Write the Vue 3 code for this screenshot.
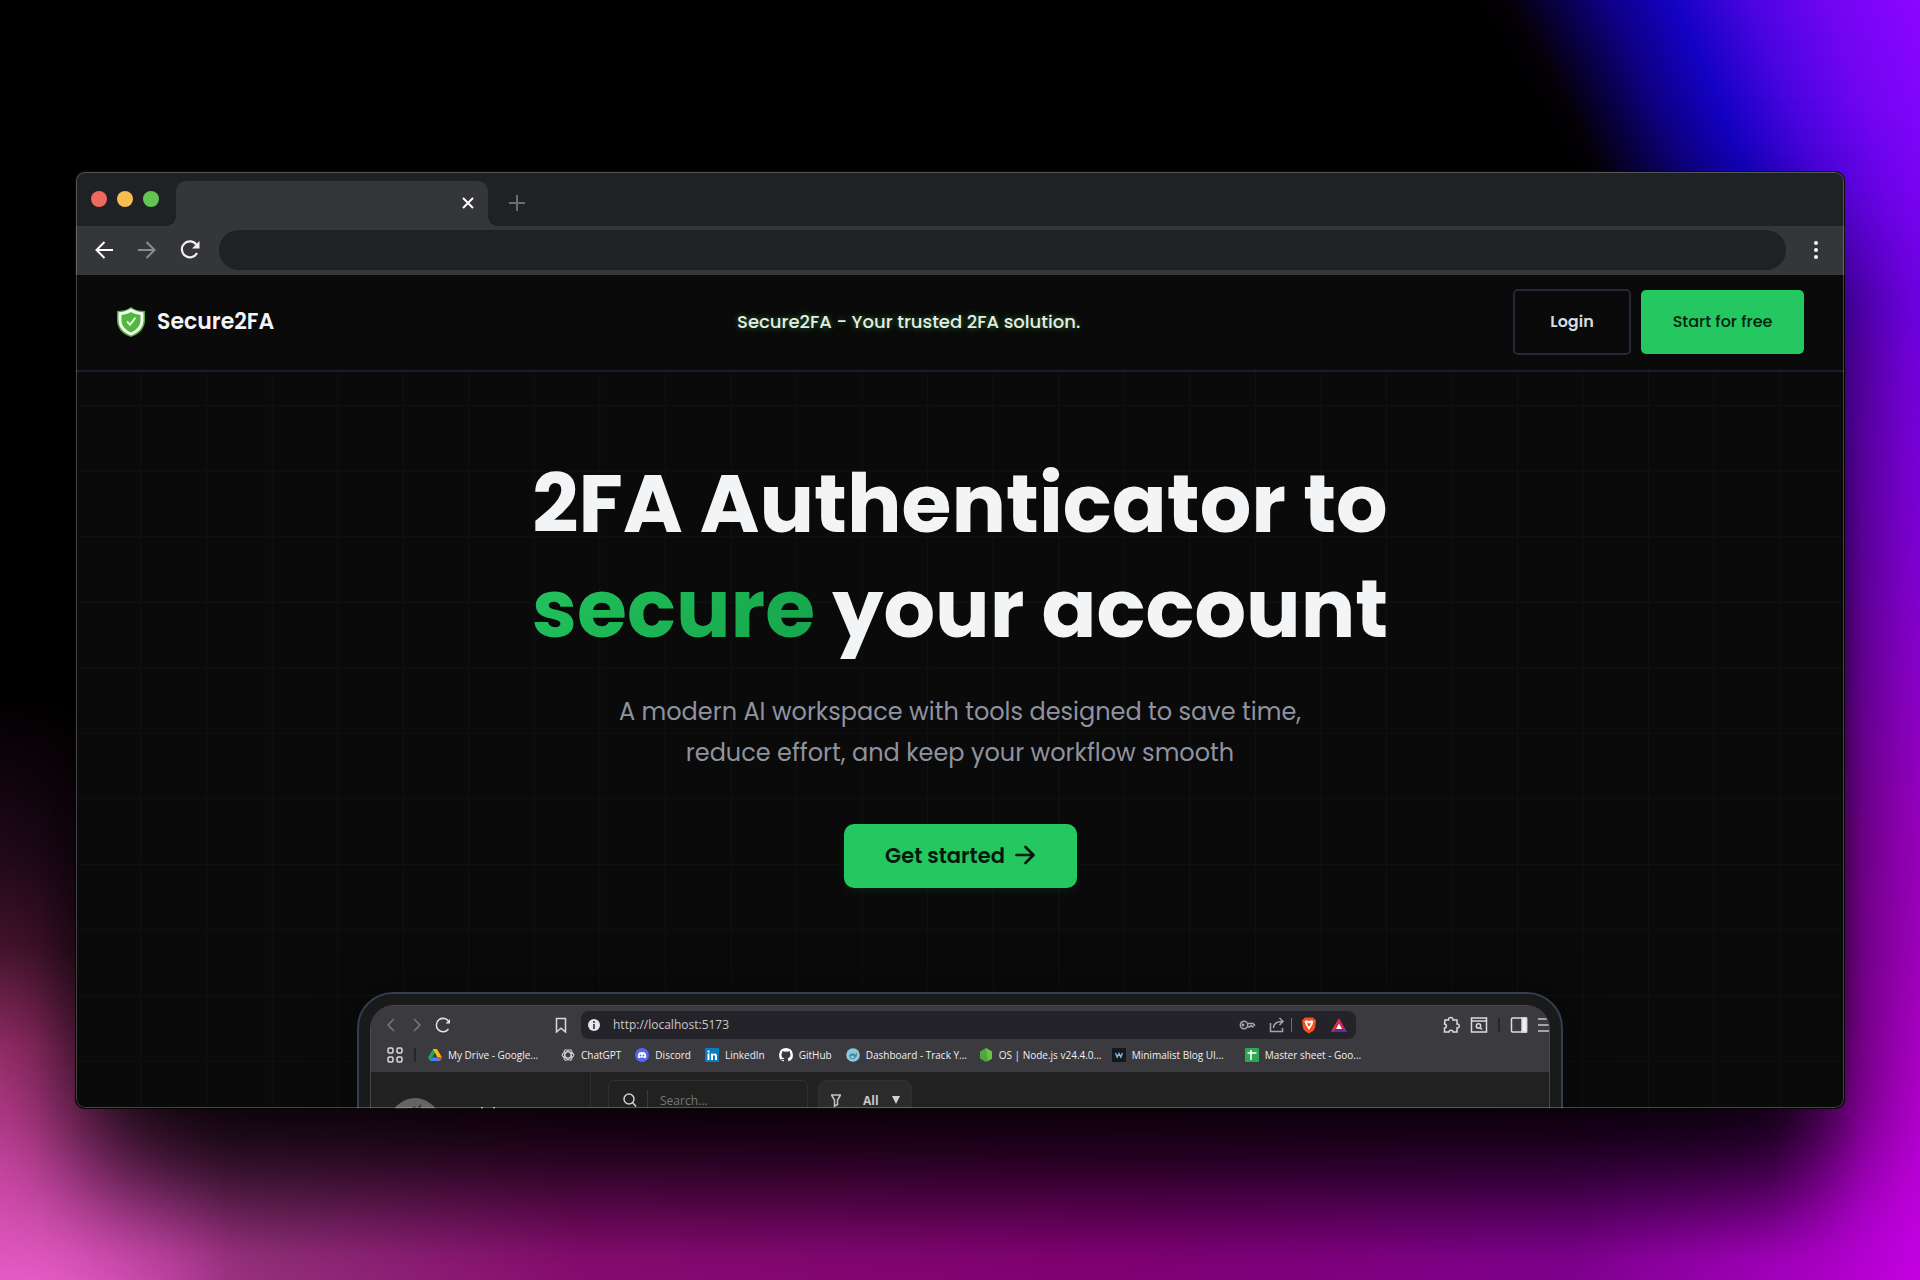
<script setup>
import { ref } from 'vue'

const address = ref('')
const search = ref('')
const filter = ref('All')

const bookmarks = [
  { icon: 'drive', label: 'My Drive - Google...', long: true },
  { icon: 'chatgpt', label: 'ChatGPT' },
  { icon: 'discord', label: 'Discord' },
  { icon: 'linkedin', label: 'LinkedIn' },
  { icon: 'github', label: 'GitHub' },
  { icon: 'dashboard', label: 'Dashboard - Track Y...', long: true },
  { icon: 'node', label: 'OS | Node.js v24.4.0...', long: true },
  { icon: 'blog', label: 'Minimalist Blog UI...', long: true },
  { icon: 'sheet', label: 'Master sheet - Goo...', long: true },
]
</script>

<template>
  <div class="desktop">
    <div class="glow glow-top"></div>
    <div class="glow glow-right"></div>
    <div class="glow glow-bottom"></div>
    <div class="glow glow-left"></div>

    <div class="window">
      <div class="tabs">
        <div class="lights">
          <span class="light red"></span>
          <span class="light yellow"></span>
          <span class="light green"></span>
        </div>
        <div class="tab">
          <button class="icon-btn" aria-label="Close tab">
            <svg width="12" height="12" viewBox="0 0 12 12" fill="none" stroke="#fff" stroke-width="2">
              <path d="M1 1l10 10M11 1L1 11" />
            </svg>
          </button>
        </div>
        <button class="icon-btn new-tab" aria-label="New tab">
          <svg width="16" height="16" viewBox="0 0 16 16" fill="none" stroke="#6b6c70" stroke-width="2">
            <path d="M8 0v16M0 8h16" />
          </svg>
        </button>
      </div>

      <div class="toolbar">
        <button class="icon-btn nav" aria-label="Back">
          <svg width="18" height="18" viewBox="0 0 18 18" fill="none" stroke="#fff" stroke-width="2">
            <path d="M18 9H1.5M9.5 1L1.5 9l8 8" />
          </svg>
        </button>
        <button class="icon-btn nav" aria-label="Forward">
          <svg width="18" height="18" viewBox="0 0 18 18" fill="none" stroke="#8b8c8f" stroke-width="2">
            <path d="M0 9h16.500M8.500 1l8 8-8 8" />
          </svg>
        </button>
        <button class="icon-btn nav" aria-label="Reload">
          <svg width="20" height="20" viewBox="0 0 20 20">
            <path d="M16.600 5A8 8 0 1 0 17 13" fill="none" stroke="#f1f1f1" stroke-width="2.200" />
            <path d="M19.500 1v7.500H12z" fill="#f1f1f1" />
          </svg>
        </button>
        <input v-model="address" class="address" type="text" aria-label="Address" />
        <button class="icon-btn menu" aria-label="Menu">
          <svg width="4" height="18" viewBox="0 0 4 18" fill="#fff">
            <circle cx="2" cy="2" r="2" />
            <circle cx="2" cy="9" r="2" />
            <circle cx="2" cy="16" r="2" />
          </svg>
        </button>
      </div>

      <div class="page">
        <header class="header">
          <a class="logo" href="#">
            <svg width="28" height="30" viewBox="0 0 28 30">
              <path d="M14 0C10 3 5 4 0 4v9c0 8 5 14 14 17 9-3 14-9 14-17V4C23 4 18 3 14 0z" fill="#4caf3c" />
              <path d="M14 1.500C10 4 6 5 1.500 5.200V13c0 7 4.500 12.500 12.500 15.500C22 25.500 26.500 20 26.500 13V5.200C22 5 18 4 14 1.500z" fill="#f4faf2" />
              <path d="M14 5C11 6.800 8 7.600 4.500 7.900V13c0 5.500 3.500 9.800 9.500 12.500 6-2.700 9.500-7 9.500-12.500V7.900C20 7.600 17 6.800 14 5z" fill="#4fb83d" />
              <path d="M10 14.500l3 3.200 5.500-7" fill="none" stroke="#e4f5df" stroke-width="2" />
            </svg>
            <span>Secure2FA</span>
          </a>
          <p class="tagline">Secure2FA - Your trusted 2FA solution.</p>
          <nav class="actions">
            <button class="btn-login">Login</button>
            <button class="btn-start">Start for free</button>
          </nav>
        </header>

        <main class="hero">
          <h1>2FA Authenticator to<br /><span class="accent">secure</span> your account</h1>
          <p class="lead">A modern AI workspace with tools designed to save time,<br />reduce effort, and keep your workflow smooth</p>
          <button class="cta">
            Get started
            <svg width="20" height="20" viewBox="0 0 20 20" fill="none" stroke="#06180d" stroke-width="2.600" stroke-linecap="round" stroke-linejoin="round">
              <path d="M1.500 10h16.500M10.500 2l8 8-8 8" />
            </svg>
          </button>

          <section class="device">
            <div class="screen">
              <div class="brave-bar">
                <div class="brave-nav">
                  <svg class="ico" viewBox="0 0 18 18" stroke="#77767b"><path d="M12 3L6 9l6 6" /></svg>
                  <svg class="ico" viewBox="0 0 18 18" stroke="#77767b"><path d="M6 3l6 6-6 6" /></svg>
                  <svg class="ico" viewBox="0 0 18 18" stroke="#e3e3e5" stroke-width="2">
                    <path d="M15 6A6.700 6.700 0 1 0 14.500 13" />
                    <path d="M16 3v4.500h-4.500z" fill="#e3e3e5" stroke="none" />
                  </svg>
                  <svg class="ico save" viewBox="0 0 18 18"><path d="M4.500 2.500h9v13.500L9 12.200 4.500 16z" /></svg>
                </div>
                <div class="brave-url">
                  <svg class="ico" viewBox="0 0 18 18" stroke="none">
                    <circle cx="9" cy="9" r="6" fill="#e6e6e8" />
                    <path d="M8 5h2v2H8zM8 8h2v5H8z" fill="#55545a" />
                  </svg>
                  <span class="url-text">http://localhost:5173</span>
                  <svg class="ico" viewBox="0 0 18 18" stroke="#a5a5a8">
                    <circle cx="6" cy="9" r="3.700" />
                    <circle cx="5" cy="9" r="0.700" />
                    <path d="M9.500 7.500H15l1.500 1.500-2 2-1.500-1.500-1.500 1.500H9.500" />
                  </svg>
                  <svg class="ico share" viewBox="0 0 18 18" stroke="#a5a5a8">
                    <path d="M2.500 7v8.500h12V12M5.500 12c0-4 3-6.500 9-6.500M11.500 2l3.500 3.500L11.500 9" />
                  </svg>
                  <span class="bar light-bar"></span>
                  <svg class="ico brave" viewBox="0 0 18 18" stroke="none">
                    <path d="M5 1.500h8l3 3-1 7.500c-1 2.500-3 4-6 5.500-3-1.500-5-3-6-5.500L2 4.500z" fill="#f4511e" />
                    <path d="M4.500 5l3-.8L9 5.500l1.500-1.300 3 .8-1 3.500L9 14 5.500 8.500z" fill="#fff" />
                    <path d="M7 6.500l2 1 2-1-1 3.500H8z" fill="#f4511e" />
                  </svg>
                  <svg class="ico" viewBox="0 0 18 18" stroke="none">
                    <path d="M9 2L1 16l4-2z" fill="#ff4724" />
                    <path d="M9 2l8 14-4-2z" fill="#a3278f" />
                    <path d="M1 16h16l-4-3H5z" fill="#5b2ea6" />
                    <path d="M9 2l5 11H4z" fill="#d9264f" />
                    <path d="M9 7.500l3 5.500H6z" fill="#fff" />
                  </svg>
                </div>
                <div class="brave-tools">
                  <svg class="ico" viewBox="0 0 18 18" stroke="#dcdcde">
                    <path d="M3 4h3.500c-.5-3.500 5-3.500 4.500 0h4v4c3-.5 3 4.500 0 4v4h-4c0-2.500-4-2.500-4 0H2.500v-4c2.500 0 2.500-4 0-4z" />
                  </svg>
                  <svg class="ico" viewBox="0 0 18 18" stroke="#dcdcde">
                    <path d="M1.500 2h15v14h-15zM1.500 5h15" />
                    <circle cx="8.500" cy="10" r="2.200" />
                    <path d="M10.500 12l1.500 1.500" />
                  </svg>
                  <span class="bar"></span>
                  <svg class="ico" viewBox="0 0 18 18" stroke="#dcdcde">
                    <rect x="1.500" y="2" width="15" height="14" rx="1" />
                    <path d="M12 2h4.500v14H12z" fill="#f2f2f3" />
                  </svg>
                  <svg class="ico" viewBox="0 0 18 18" stroke="#c8c8ca"><path d="M0 3h18M0 9h18M0 15h18" /></svg>
                </div>
              </div>

              <div class="bookmarks">
                <svg class="ico" viewBox="0 0 18 18" stroke="#dcdcde">
                  <rect x="2" y="2" width="5" height="5" rx="1.500" />
                  <rect x="11" y="2" width="5" height="5" rx="1.500" />
                  <rect x="2" y="11" width="5" height="5" rx="1.500" />
                  <rect x="11" y="11" width="5" height="5" rx="1.500" />
                </svg>
                <span class="bar"></span>
                <a v-for="b in bookmarks" :key="b.label" class="bookmark" href="#">
                  <svg class="fav" viewBox="0 0 14 14">
                    <g v-if="b.icon === 'drive'">
                      <path d="M5 1h4L4.500 9 2 13 0 9.500z" fill="#23a55a" />
                      <path d="M5 1h4l5 8.500h-4.500z" fill="#fbbc04" />
                      <path d="M4.300 9.500H14L12 13H2z" fill="#4285f4" />
                      <path d="M10 9.500h4L12 13z" fill="#ea4335" />
                    </g>
                    <g v-else-if="b.icon === 'chatgpt'" fill="none" stroke="#cfcfd2" stroke-width="1.200">
                      <ellipse cx="7" cy="7" rx="5.800" ry="3" />
                      <ellipse cx="7" cy="7" rx="5.800" ry="3" transform="rotate(60 7 7)" />
                      <ellipse cx="7" cy="7" rx="5.800" ry="3" transform="rotate(120 7 7)" />
                    </g>
                    <g v-else-if="b.icon === 'discord'">
                      <circle cx="7" cy="7" r="7" fill="#5865f2" />
                      <path d="M4 4.500q3-1 6 0 1.500 2.500 1.200 5-1 .8-2 .8L8.700 9.500H5.300l-.5.800q-1 0-2-.8Q2.500 7 4 4.500z" fill="#fff" />
                      <circle cx="5.500" cy="7.500" r="0.900" fill="#5865f2" />
                      <circle cx="8.500" cy="7.500" r="0.900" fill="#5865f2" />
                    </g>
                    <g v-else-if="b.icon === 'linkedin'">
                      <rect width="14" height="14" fill="#0a7bbd" />
                      <path d="M2.500 5.500h2V12h-2zM2.500 2.500h2v2h-2zM6 5.500h2v1c1-1.600 4-1.500 4 1.500v4h-2V8.500c0-1.800-2-1.600-2 0V12H6z" fill="#fff" />
                    </g>
                    <g v-else-if="b.icon === 'github'">
                      <path d="M7 0a7 7 0 0 0-2.200 13.600V12c-2 .4-2.600-.6-3-1.500 1.200.2 1.700 1 3 .6.100-.5.300-.8.500-1C3 9.800 2.400 8.500 2.500 6.500c0-.7.300-1.300.7-1.800-.1-.5-.1-1.200.1-1.800.7 0 1.300.4 1.900.8a7 7 0 0 1 3.600 0c.6-.4 1.200-.8 1.900-.8.200.6.200 1.300.1 1.800.4.500.7 1.100.7 1.800 0 2-.7 3.300-2.800 3.600.4.400.5.900.5 1.500v2A7 7 0 0 0 7 0z" fill="#fff" />
                    </g>
                    <g v-else-if="b.icon === 'dashboard'">
                      <circle cx="7" cy="7" r="6.800" fill="#86cbe8" />
                      <path d="M3 7l3-2 2 1 3-2v4l-3 3-4-.500z" fill="#4c8ba8" />
                      <path d="M8 5l3-1-1 3z" fill="#e5a24a" />
                      <path d="M4 9l3-1 1 2z" fill="#f2f2d8" />
                    </g>
                    <g v-else-if="b.icon === 'node'">
                      <path d="M7 0l6 3.500v7L7 14l-6-3.500v-7z" fill="#4fa83d" />
                      <path d="M7 0l6 3.500v7L9 13z" fill="#6cc04a" />
                    </g>
                    <g v-else-if="b.icon === 'blog'">
                      <rect width="14" height="14" fill="#15181c" />
                      <path d="M3.500 5l1.700 4L7 5.500 8.800 9l1.700-4" fill="none" stroke="#7fb2dd" stroke-width="1.400" />
                    </g>
                    <g v-else>
                      <rect width="14" height="14" rx="1" fill="#2fa652" />
                      <path d="M2.500 5h9M6 2v10" stroke="#fff" stroke-width="1.600" />
                    </g>
                  </svg>
                  <span :class="{ long: b.long }">{{ b.label }}</span>
                </a>
              </div>

              <div class="app">
                <aside class="side">
                  <svg width="50" height="50" viewBox="0 0 50 50">
                    <circle cx="25" cy="25" r="25" fill="#66645f" />
                    <path d="M14 14l5-4 2 1 3-3 3 2 4-4v4l6 6v14H14z" fill="#35342f" />
                  </svg>
                  <svg class="name" width="60" height="12" viewBox="0 0 60 12" fill="#b8b8b8">
                    <path d="M13 0h2v12h-2zM25 0h2v12h-2z" />
                  </svg>
                </aside>
                <div class="content">
                  <label class="search">
                    <svg class="ico" viewBox="0 0 18 18" stroke="#d0d0d0" stroke-width="1.800">
                      <circle cx="8" cy="8" r="5" />
                      <path d="M11.500 11.500L15 15.500" />
                    </svg>
                    <input v-model="search" type="text" placeholder="Search..." aria-label="Search" />
                  </label>
                  <label class="filter">
                    <svg class="ico" viewBox="0 0 18 18" stroke="#c4c4c4" stroke-width="1.800">
                      <path d="M4 4h10M4.500 4l3 5v6l3-1.500V9l3-5" />
                    </svg>
                    <select v-model="filter" aria-label="Filter">
                      <option>All</option>
                    </select>
                    <svg class="caret" width="8" height="8" viewBox="0 0 8 8" fill="#cfcfcf"><path d="M0 0h8L4 8z" /></svg>
                  </label>
                </div>
              </div>
            </div>
          </section>
        </main>
      </div>
    </div>
  </div>
</template>

<style>
body {
  background: #000;
}
</style>

<style scoped>
* {
  box-sizing: border-box;
}
button,
input,
select {
  font-family: inherit;
  margin: 0;
}
.desktop {
  position: relative;
  height: 100vh;
  padding: 171px 75px;
  background: #000;
  overflow: hidden;
  font-family: Poppins, Inter, sans-serif;
}

/* wallpaper */
.glow {
  position: absolute;
  inset: 0;
}
.glow-top {
  background: radial-gradient(65vw 100vw at 52% 62%, #000 56%, #050008 58%, #0e0088 64%, #1402c4 68%, #4a04e0 73%, #7005f2 78%, #9206ff 86%);
  mask-image: linear-gradient(90deg, transparent 60%, #000 61%), linear-gradient(180deg, #000 30%, transparent 50%);
  mask-composite: intersect;
}
.glow-right {
  background: linear-gradient(180deg, #8c06ff, #7a00f4 24%, #8a00e8 42%, #a400cc 65%, #b400cc 85%, #c400e4);
  mask-image: linear-gradient(90deg, transparent 92%, #000 97%), linear-gradient(180deg, transparent 12%, #000 28%);
  mask-composite: intersect;
}
.glow-bottom {
  background: linear-gradient(90deg, #e65cc6, #c23fa4 5%, #98307e 14%, #8c0c74 30%, #86007a 60%, #840094 82%, #b000cc 95%, #c400e4);
  mask-image: linear-gradient(180deg, transparent 74%, #000 98%);
}
.glow-left {
  background: linear-gradient(180deg, transparent 54%, #240a1c 67%, #4a1530 74%, #a03070 82%, #cc46a4 91%, #e65cc6);
  mask-image: linear-gradient(90deg, #000 2%, transparent 12%);
}

/* browser window */
.window {
  position: relative;
  display: flex;
  flex-direction: column;
  height: 100%;
  border-radius: 10px;
  overflow: hidden;
  background: #0a0a0a;
  box-shadow: 0 70px 120px rgba(0, 0, 0, 0.92);
}
.window::after {
  content: '';
  position: absolute;
  inset: 0;
  border: 1px solid rgba(0, 0, 0, 0.7);
  border-radius: 10px;
  box-shadow: inset 0 0 0 1px rgba(255, 255, 255, 0.24);
  pointer-events: none;
}
.icon-btn {
  display: flex;
  align-items: center;
  justify-content: center;
  padding: 0;
  border: 0;
  background: none;
}
.tabs {
  display: flex;
  flex: none;
  align-items: flex-end;
  height: 55px;
  background: #202124;
}
.lights {
  display: flex;
  gap: 10px;
  align-self: center;
  width: 101px;
  padding-left: 16px;
}
.light {
  width: 16px;
  height: 16px;
  border-radius: 50%;
}
.red {
  background: #ee6a5f;
}
.yellow {
  background: #f5bf4f;
}
.green {
  background: #62c655;
}
.tab {
  position: relative;
  display: flex;
  align-items: center;
  justify-content: flex-end;
  width: 312px;
  height: 45px;
  padding: 0 14px 2px;
  border-radius: 10px 10px 0 0;
  background: #35363a;
}
.tab::before,
.tab::after {
  content: '';
  position: absolute;
  bottom: 0;
  width: 10px;
  height: 10px;
}
.tab::before {
  right: 100%;
  background: radial-gradient(circle at 0 0, transparent 10px, #35363a 10px);
}
.tab::after {
  left: 100%;
  background: radial-gradient(circle at 100% 0, transparent 10px, #35363a 10px);
}
.new-tab {
  height: 45px;
  margin-left: 21px;
  padding-bottom: 2px;
}
.toolbar {
  display: flex;
  flex: none;
  align-items: center;
  height: 49px;
  padding: 0 0 2px 18px;
  background: #35363a;
}
.nav {
  width: 22px;
  margin-right: 21px;
}
.address {
  flex: 1;
  height: 40px;
  margin-left: -3px;
  padding: 0 20px;
  border: 0;
  border-radius: 20px;
  background: #202124;
  color: #e8eaed;
  outline: none;
}
.menu {
  width: 59px;
}

/* page */
.page {
  --cell: calc((100vw - 150px) / 27);
  flex: 1;
  min-height: 0;
  overflow: hidden;
  background:
    linear-gradient(90deg, #0d1210 1px, transparent 1px) 0 -1px / var(--cell) var(--cell),
    linear-gradient(180deg, #0d1210 1px, transparent 1px) 0 -1px / var(--cell) var(--cell),
    #0a0a0a;
}
.header {
  display: flex;
  align-items: center;
  justify-content: space-between;
  height: 97px;
  padding: 0 41px 2px 42px;
  border-bottom: 2px solid #171d29;
  background: #0a0a0a;
}
.logo {
  display: flex;
  align-items: center;
  gap: 12px;
  padding-right: 30px;
  color: #f3f4f6;
  font-size: 22px;
  font-weight: 600;
  text-decoration: none;
}
.tagline {
  margin: 0;
  color: #e5ebe6;
  font-size: 18px;
  font-weight: 500;
  text-shadow: 0 0 6px rgba(74, 222, 80, 0.5);
}
.actions {
  display: flex;
  align-items: center;
  gap: 10px;
}
.btn-login {
  width: 118px;
  height: 66px;
  border: 2px solid #232935;
  border-radius: 5px;
  background: transparent;
  color: #d9dbdf;
  font-size: 16px;
  font-weight: 600;
}
.btn-start {
  width: 163px;
  height: 64px;
  border: 0;
  border-radius: 5px;
  background: #24c760;
  color: #06230f;
  font-size: 16px;
  font-weight: 500;
}
.hero {
  display: flex;
  flex-direction: column;
  align-items: center;
  padding-top: 79px;
  text-align: center;
}
h1 {
  margin: 0;
  color: #f3f4f6;
  font-size: 81px;
  line-height: 105px;
  font-weight: 700;
}
.accent {
  background: linear-gradient(135deg, #22c55e, #16a34a);
  background-clip: text;
  color: transparent;
}
.lead {
  margin: 30px 0 51px;
  color: #8f939f;
  font-size: 24px;
  line-height: 41px;
}
.cta {
  display: flex;
  align-items: center;
  justify-content: center;
  gap: 10px;
  flex: none;
  width: 233px;
  height: 64px;
  padding: 0 0 2px;
  border: 0;
  border-radius: 10px;
  background: #24c760;
  color: #06180d;
  font-size: 21px;
  font-weight: 600;
  box-shadow: 0 4px 10px rgba(36, 199, 96, 0.08);
}

/* device mockup */
.device {
  flex: none;
  width: calc(100% - 564px);
  margin-top: 104px;
  padding: 11px;
  border: 2px solid #333e50;
  border-radius: 36px;
  background: #1a1a1a;
  box-shadow: 0 0 50px rgba(0, 0, 0, 0.4);
  font-family: 'Segoe UI', 'Open Sans', sans-serif;
  text-align: left;
}
.screen {
  height: 600px;
  border: 1px solid #48484a;
  border-radius: 24px;
  overflow: hidden;
  background: #212121;
}
.ico {
  flex: none;
  width: 18px;
  height: 18px;
  fill: none;
  stroke-width: 1.5;
}
.bar {
  flex: none;
  width: 2px;
  height: 14px;
  background: #27262b;
}
.brave-bar {
  display: grid;
  grid-template-columns: 210px 1fr 193px;
  align-items: center;
  height: 37px;
  background: #3b3a3f;
}
.brave-nav {
  display: flex;
  gap: 8px;
  padding: 0 11px;
}
.save {
  margin-left: auto;
  stroke: #dcdcde;
}
.brave-url {
  display: flex;
  align-items: center;
  height: 28px;
  padding: 0 8px 0 4px;
  border-radius: 8px;
  background: #242329;
}
.url-text {
  flex: 1;
  margin-left: 10px;
  color: #c9c9cc;
  font-size: 12px;
}
.share {
  margin-left: 12px;
}
.light-bar {
  width: 1px;
  margin-left: 5px;
  background: #6d6d72;
}
.brave {
  margin: 0 12px 0 8px;
}
.brave-tools {
  display: flex;
  align-items: center;
  gap: 10px;
  padding-left: 86px;
  overflow: hidden;
}
.bookmarks {
  display: flex;
  align-items: center;
  height: 29px;
  padding: 0 0 6px 15px;
  background: #3b3a3f;
}
.bookmarks > .bar {
  margin: 0 12px 0 10px;
}
.bookmark {
  display: flex;
  align-items: center;
  flex: none;
  gap: 6px;
  margin-right: 14px;
  color: #f0f0f2;
  font-size: 10px;
  font-weight: 500;
  line-height: 14px;
  text-decoration: none;
  white-space: nowrap;
}
.fav {
  width: 14px;
  height: 14px;
}
.long {
  width: 99px;
}
.app {
  display: flex;
  height: 400px;
}
.side {
  display: flex;
  gap: 28px;
  width: 220px;
  padding: 26px 0 0 19px;
  border-right: 1px solid #2d2d2d;
}
.name {
  margin-top: 9px;
}
.content {
  display: flex;
  gap: 10px;
  padding: 8px 0 0 17px;
}
.search,
.filter {
  display: flex;
  align-items: center;
  height: 40px;
  border: 1px solid #303030;
  border-radius: 6px;
}
.search {
  width: 200px;
  padding-left: 12px;
}
.search input {
  width: 140px;
  height: 20px;
  margin-left: 8px;
  padding: 0 0 0 12px;
  border: 0;
  border-left: 1px solid #3a3a3a;
  background: none;
  color: #d0d0d0;
  font-size: 12px;
  outline: none;
}
.search input::placeholder {
  color: #757575;
}
.filter {
  width: 94px;
  padding: 0 11px 0 8px;
  border-radius: 8px;
  background: #2b2b2b;
}
.filter select {
  flex: 1;
  min-width: 0;
  padding: 0 0 0 18px;
  border: 0;
  background: none;
  color: #c9c9c9;
  font-size: 12px;
  font-weight: 700;
  appearance: none;
}
.caret {
  flex: none;
}
</style>
